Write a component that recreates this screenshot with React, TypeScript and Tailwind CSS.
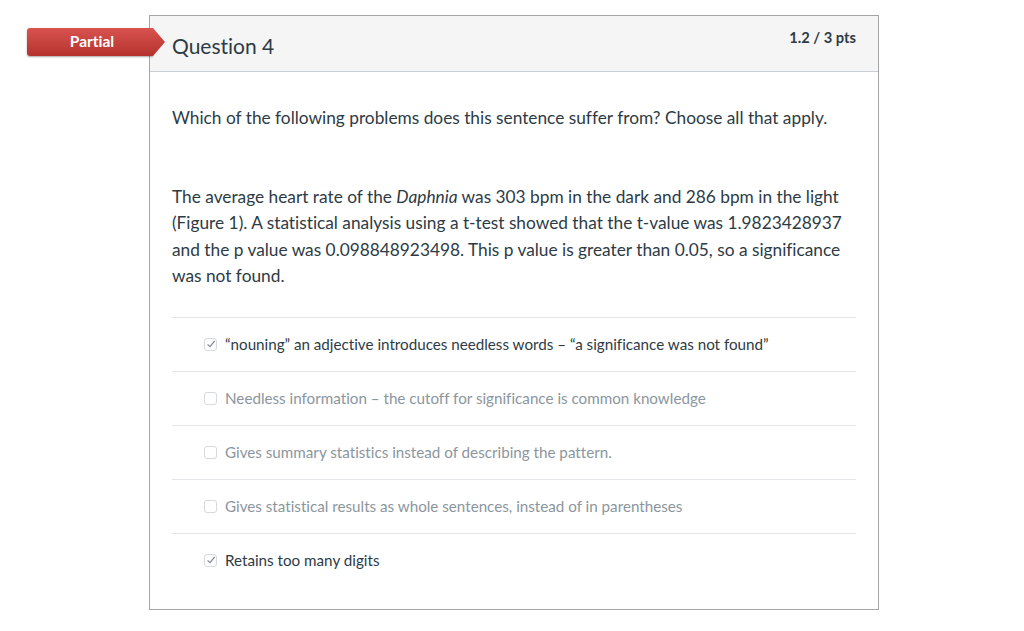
import { Fragment } from 'react';

const ANSWERS = [
  { text: '“nouning” an adjective introduces needless words – “a significance was not found”', checked: true },
  { text: 'Needless information – the cutoff for significance is common knowledge', checked: false },
  { text: 'Gives summary statistics instead of describing the pattern.', checked: false },
  { text: 'Gives statistical results as whole sentences, instead of in parentheses', checked: false },
  { text: 'Retains too many digits', checked: true },
];

function Checkbox({ checked }: { checked: boolean }) {
  return (
    <span className="w-[13px] h-[13px] rounded-[3px] border border-[#d6dadd] bg-white flex items-center justify-center shrink-0">
      {checked && (
        <svg width="10" height="10" viewBox="0 0 10 10" fill="none">
          <path d="M1.6 5.3 L4 7.7 L8.7 1.8" stroke="#7d878e" strokeWidth="1.2" />
        </svg>
      )}
    </span>
  );
}

export default function App() {
  return (
    <div className="w-[1024px] h-[631px] bg-white relative font-['Lato',sans-serif] text-[#2d3b45] [font-variant-ligatures:no-common-ligatures]">
      <div className="pt-[15px] pl-[149px]">
        <div className="w-[730px] h-[595px] border border-[#a5a5a5] relative">
          <div className="h-[56px] bg-[#f5f5f5] border-b border-[#c7cdd1] flex justify-between pl-[22px] pr-[22px]">
            <h2 className="text-[21px] pt-[15px] leading-[30px] text-[#2d3b45]">Question 4</h2>
            <span className="text-[14.7px] font-bold pt-[11px] leading-[20px] text-[#2d3b45]">1.2 / 3 pts</span>
          </div>

          <div className="px-[22px] pt-[33px]">
            <p className="text-[17.3px] leading-[26px]">Which of the following problems does this sentence suffer from? Choose all that apply.</p>
            <p className="text-[17.3px] leading-[26.4px] mt-[53px]">
              The average heart rate of the <em>Daphnia</em> was 303 bpm in the dark and 286 bpm in the light (Figure 1). A statistical analysis using a t-test showed that the t-value was 1.9823428937 and the p value was 0.098848923498. This p value is greater than 0.05, so a significance was not found.
            </p>

            <div className="mt-[27px]">
              {ANSWERS.map((a, i) => (
                <Fragment key={i}>
                  <div className="border-t border-[#e4e7e9] h-[54px] flex items-center pl-[32px] gap-[8px]">
                    <Checkbox checked={a.checked} />
                    <span className={`text-[15.2px] ${a.checked ? 'text-[#2d3b45]' : 'text-[#8b969e]'}`}>{a.text}</span>
                  </div>
                </Fragment>
              ))}
            </div>
          </div>
        </div>
      </div>

      <div className="absolute left-[27px] top-[28px] flex items-center">
        <div className="w-[126px] h-[28px] bg-gradient-to-b from-[#d9534f] to-[#b4322d] rounded-l-[3px] flex items-center justify-center shadow-[0_1px_2px_rgba(0,0,0,0.35)]">
          <span className="text-white font-bold text-[15.5px] pl-[4px]">Partial</span>
        </div>
        <svg width="13" height="28" viewBox="0 0 13 28" className="-ml-px">
          <defs>
            <linearGradient id="pg" x1="0" y1="0" x2="0" y2="1">
              <stop offset="0" stopColor="#d9534f" />
              <stop offset="1" stopColor="#b4322d" />
            </linearGradient>
          </defs>
          <path d="M0 0 L1 0 L13 14 L1 28 L0 28 Z" fill="url(#pg)" />
        </svg>
      </div>
    </div>
  );
}
